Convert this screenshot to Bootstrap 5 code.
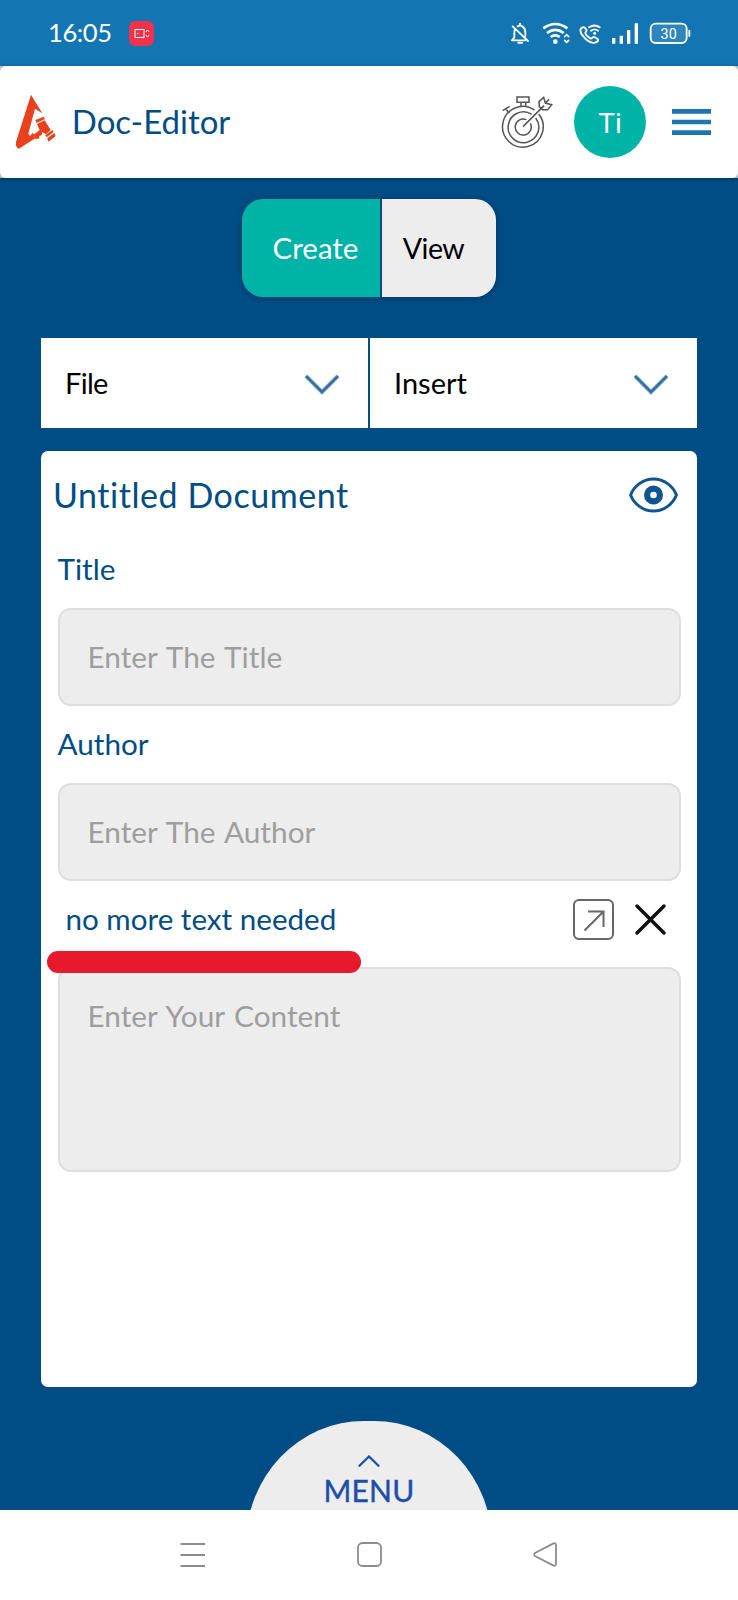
<!DOCTYPE html>
<html lang="en">
<head>
<meta charset="utf-8">
<meta name="viewport" content="width=device-width, initial-scale=1">
<title>Doc-Editor</title>
<link href="https://cdn.jsdelivr.net/npm/bootstrap@5.3.0/dist/css/bootstrap.min.css" rel="stylesheet">
<style>
:root { --navy:#004d85; --teal:#00b3a7; --grey:#ededed; }
html, body { height:1600px; overflow:hidden; }
body { background:var(--navy); font-family:Lato,"Open Sans",sans-serif; color:#000; }
svg { display:block; flex:none; }
.statusbar { height:66px; background:#1376b2; color:#fff; padding-left:48px; }
.clock { font-size:25.5px; line-height:64px; height:66px; letter-spacing:-.4px; width:81px; }
.phone-icons { margin-left:355px; }
.headwrap { background:#b9bfc5; height:112px; box-shadow:0 1px 4px rgba(0,20,45,.5); }
.apphead { height:112px; background:#fff; border-radius:6px; padding:0 27px 0 15px; }
.brandname { font-size:33px; line-height:40px; color:var(--navy); margin:0 0 2px 15.500px; }
.goal { margin-bottom:2px; }
.avatar { width:72px; height:72px; background:var(--teal); color:#fff; font:28px/75px Roboto,sans-serif; margin:0 26px 0 21px; }
.toggle { width:254px; height:98px; margin:21px 0 0 242px; border-radius:21px; box-shadow:0 1px 7px rgba(0,25,55,.4); gap:2px; overflow:hidden; }
.toggle button { border:0; height:98px; font-size:29.5px; }
.toggle .on { width:138px; background:var(--teal); color:#fff; padding:0 0 0 9px; }
.toggle .off { flex:1; background:var(--grey); color:#000; padding:0 11px 0 0; font-size:28.5px; letter-spacing:-.5px; }
.pickers { margin:41px 41px 0; gap:2px; }
.picker { height:90px; background:#fff; border:0; padding:0 28px 0 24px; font-size:29px; color:#000; }
.picker svg { margin-top:2px; }
.picker .cap-tight { letter-spacing:-.7px; }
.sheet { margin:23px 41px 0; height:936px; border-radius:7px; background:#fff; padding:0 16.500px; color:var(--navy); }
.sheethead { height:87px; margin-bottom:11px; }
.doctitle { font-size:34px; line-height:44px; margin-left:-4.500px; letter-spacing:.55px; }
.eye { margin-right:3px; }
.lbl { font-size:29.7px; line-height:40px; display:block; }
.lbl.second { margin-top:18px; }
.field.form-control { height:98px; margin-top:19px; background:var(--grey); border:2px solid #dedede; border-radius:13px; padding:0 28px 2px; font-size:29.8px; line-height:36px; color:#000; resize:none; }
.field::placeholder { color:#9e9e9e; opacity:1; word-spacing:1.8px; }
.field.area.form-control { height:205px; margin-top:0; padding-top:29px; }
.noterow { height:76px; margin-bottom:10px; padding:0 14px 0 8px; }
.notetext { font-size:29.6px; line-height:40px; }
.cross { margin-left:19.500px; }
.marker { position:absolute; left:-11px; top:70px; width:314px; height:21.500px; border-radius:11px; background:#e6192d; }
.menuwrap { height:89px; margin-top:34px; overflow:hidden; }
.dome { width:246px; height:250px; border:0; border-radius:118px / 123px; background:var(--grey); color:#1c4fa8; padding:33.500px 0 0; }
.domelabel { font-size:30px; line-height:36px; letter-spacing:.2px; margin-top:5px; -webkit-text-stroke:.4px #1c4fa8; }
.sysnav { height:90px; background:#fff; padding:0 180px 2px; }
</style>
</head>
<body>
<div class="statusbar d-flex align-items-center">
  <span class="clock">16:05</span>
  <svg width="25" height="25" viewBox="0 0 25 25" fill="none" stroke="#fff"><rect width="25" height="25" rx="6" fill="#f0324b" stroke="none"/><rect x="6" y="8.500" width="9" height="8" stroke-width="1"/><path d="M8 12.500h1.500M17 11l1.500-2 1.500 2M17 14l1.500 2 1.500-2" stroke-width="1"/></svg>
  <svg class="phone-icons" width="183" height="25" viewBox="90 61 549 75" fill="none" stroke="#fff" stroke-width="5.500" stroke-linecap="round" stroke-linejoin="round">
    <path d="M139 119H99L106 110V96Q106 88 109 84M116 77Q123 73 130 77Q139 82 139 95V107M123 69V73M101 77L147 121"/><path d="M118 126H129" stroke-width="6"/>
    <g stroke-width="8" stroke-linecap="butt"><path d="M193 83Q229 57 265 83M204 97Q229 78 254 97M215 109Q229 99 242 109"/></g><circle cx="229" cy="123" r="7" fill="#fff" stroke="none"/>
    <path d="M257 108l6-6 6 6M257 119l6 6 6-6" stroke-width="5"/>
    <path d="M311 80C300 84 304 96 311 105C322 119 337 128 348 126C357 124 361 117 353 113L346 109C341 107 340 116 334 113C328 110 321 104 319 98C318 93 326 92 322 87L318 82Q315 78 311 80Z"/>
    <path d="M330 80Q347 69 362 80M336 90Q347 82 357 90"/><circle cx="347" cy="98" r="4.500" fill="#fff" stroke="none"/>
    <g stroke-width="10" stroke-linecap="butt"><path d="M404 129V112M427 129V105M449 129V88M472 129V68"/></g>
    <rect x="515" y="69" width="108" height="58" rx="15" fill="#fff" fill-opacity=".12"/><path d="M631 90V106"/>
    <text x="569" y="114" text-anchor="middle" font-family="Roboto, sans-serif" font-size="43" fill="#fff" stroke="none">30</text>
  </svg>
</div>
<div class="headwrap">
<header class="apphead d-flex align-items-center">
  <svg width="41.300" height="55.300" viewBox="46 283 124 166" fill="#e8411b">
    <path d="M94 285L128 341L106 327L86 402L91 409L100 399L107 416L60 446Q54 449 51 441Q47 437 49 427Z"/>
    <path d="M107 361L132 351L136 358L111 370ZM112 373L135 362L153 391L139 404L128 397L126 407L118 409L120 416L109 419L101 405L120 392ZM137 407L158 391L162 397L141 413ZM143 416L164 400L168 409L147 426Z"/>
  </svg>
  <span class="brandname me-auto">Doc-Editor</span>
  <svg class="goal" width="53" height="53" viewBox="60 284 159 159" fill="none" stroke="#555" stroke-width="4.600">
    <path d="M163 329A61 61 0 1 0 176 341M155 342A46 46 0 1 0 167 353M139 358A24 24 0 1 0 151 369"/>
    <path d="M111 290H147V306H111ZM123 306V318M137 306V319M68 331L89 318M77 326L88 338M129 379L192 316M178 319L177 304L191 291L196 308L215 313L203 328L187 328ZM196 308L207 297"/>
  </svg>
  <span class="avatar rounded-circle text-center">Ti</span>
  <svg width="39" height="26" viewBox="0 0 39 26" fill="#1d75ae"><path d="M0 0H39V4.700H0ZM0 10.700H39V15.300H0ZM0 21.300H39V26H0Z"/></svg>
</header>
</div>
<div class="toggle d-flex">
  <button class="on">Create</button>
  <button class="off">View</button>
</div>
<div class="pickers d-flex">
  <button class="picker flex-fill w-50 d-flex align-items-center justify-content-between"><span class="cap-tight">File</span>
    <svg width="36" height="22" viewBox="0 0 36 22" fill="none" stroke="#9fcbe8" stroke-width="4.500"><path d="M2 3L18 19L34 3"/><path d="M2 3L18 19L34 3" stroke="#3a6d9c" stroke-width="2.700"/></svg></button>
  <button class="picker flex-fill w-50 d-flex align-items-center justify-content-between"><span>Insert</span>
    <svg width="36" height="22" viewBox="0 0 36 22" fill="none" stroke="#9fcbe8" stroke-width="4.500"><path d="M2 3L18 19L34 3"/><path d="M2 3L18 19L34 3" stroke="#3a6d9c" stroke-width="2.700"/></svg></button>
</div>
<main class="sheet">
  <div class="sheethead d-flex align-items-center justify-content-between">
    <span class="doctitle">Untitled Document</span>
    <svg class="eye" width="49" height="36" viewBox="0 0 49 36" fill="none" stroke="#0f5592"><path d="M1.600 18C5 9 14 2 24.500 2S44 9 47.400 18C44 27 35 34 24.500 34S5 27 1.600 18Z" stroke-width="3"/><circle cx="24.500" cy="18" r="6.400" stroke-width="6.200"/></svg>
  </div>
  <label class="lbl" for="t">Title</label>
  <input id="t" class="field form-control" placeholder="Enter The Title">
  <label class="lbl second" for="a">Author</label>
  <input id="a" class="field form-control" placeholder="Enter The Author">
  <div class="noterow d-flex align-items-center position-relative">
    <span class="notetext me-auto">no more text needed</span>
    <svg width="41" height="41" viewBox="0 0 41 41" fill="none" stroke="#666" stroke-width="2"><rect x="1" y="1" width="39" height="39" rx="5"/><path d="M11.500 31.500L30.500 12.500M15 12.500H30.500V28"/></svg>
    <svg class="cross" width="33" height="33" viewBox="0 0 33 33" stroke="#111" stroke-width="3.500" stroke-linecap="round"><path d="M3 3L30 30M30 3L3 30"/></svg>
    <span class="marker"></span>
  </div>
  <textarea class="field area form-control" placeholder="Enter Your Content"></textarea>
</main>
<div class="menuwrap d-flex justify-content-center align-items-start">
  <button class="dome d-flex flex-column align-items-center">
    <svg width="22" height="12" viewBox="0 0 22 12" fill="none" stroke="#1c4fa8" stroke-width="2.300" stroke-linecap="round"><path d="M1.500 10.800L11 1.500L20.500 10.800"/></svg>
    <span class="domelabel">MENU</span>
  </button>
</div>
<nav class="sysnav d-flex align-items-center justify-content-between">
  <svg width="25" height="25" viewBox="0 0 25 25" stroke="#8c8c8c" stroke-width="2"><path d="M0.500 2H25M0.500 13H25M0.500 24H25"/></svg>
  <svg width="25" height="25" viewBox="0 0 25 25" fill="none" stroke="#8c8c8c" stroke-width="1.800"><rect x="1" y="1" width="23" height="23" rx="4.500"/></svg>
  <svg width="25" height="25" viewBox="0 0 25 25" fill="none" stroke="#8c8c8c" stroke-width="1.800"><path d="M2 11L20.500 1.400Q23 .8 23 3V22Q23 24.200 20.500 23.600L2 14Q.3 12.500 2 11Z"/></svg>
</nav>
<script src="https://cdn.jsdelivr.net/npm/bootstrap@5.3.0/dist/js/bootstrap.bundle.min.js"></script>
</body>
</html>
